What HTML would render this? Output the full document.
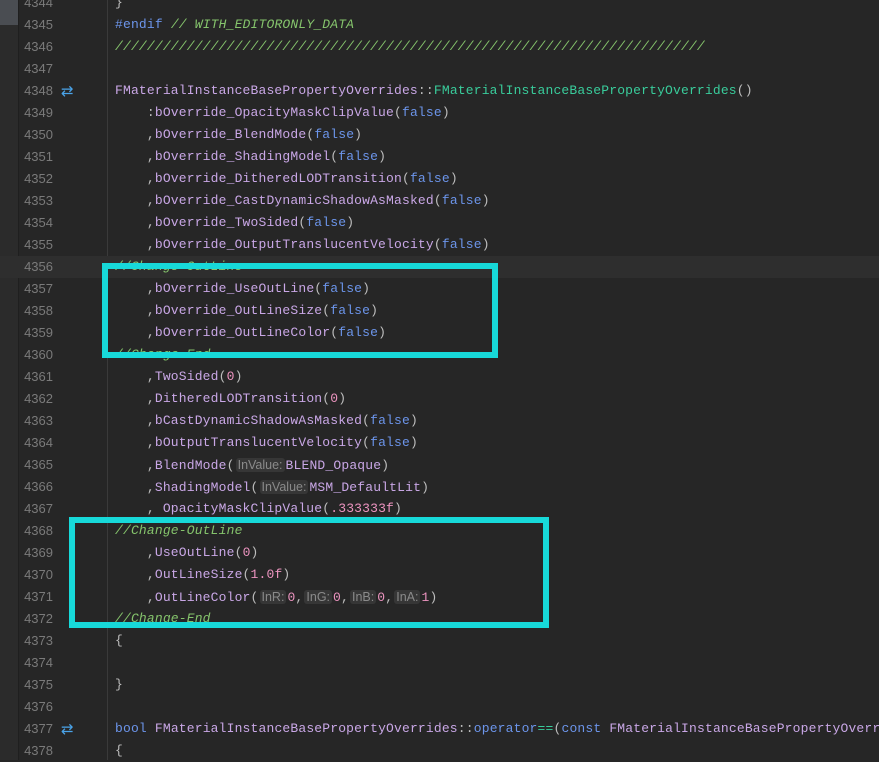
<!DOCTYPE html>
<html><head><meta charset="utf-8"><style>
body{margin:0;width:879px;height:760px;background:#262626;overflow:hidden;position:relative;font-family:"Liberation Mono",monospace;font-size:13px}
.strip{position:absolute;left:0;top:0;width:18px;height:760px;background:#2b2b2b;border-right:1px solid #1f1f1f}
.strip div{position:absolute;left:0;top:0;width:18px;height:25px;background:#4a4d52}
.fold{position:absolute;left:107px;top:0;width:1px;height:760px;background:#3a3a3a}
.r{position:absolute;left:0;height:22px;line-height:22px;width:879px;white-space:pre}
.hl{background:#2e2e2e}
.n{position:absolute;left:18px;width:35px;text-align:right;color:#7a7a7a;font-family:"Liberation Sans",sans-serif;font-size:13px}
.c{position:absolute;left:115px;color:#bdbdbd;letter-spacing:0.17px}
.i{color:#c9a7e6}.g{color:#39cc9b}.b{color:#6c95eb}.m{color:#ed94c0}
.cm{color:#85c46c;font-style:italic}
.h{background:#363636;color:#8a8a8a;font-family:"Liberation Sans",sans-serif;font-size:12.5px;border-radius:3px;padding:0 2px;margin:0 1px;letter-spacing:0}
.ic{position:absolute;left:61px;color:#4aa3e8;font-size:15px;font-family:"DejaVu Sans",sans-serif}
.box{position:absolute;border:6px solid #17d9d9;box-sizing:border-box}
</style></head><body>
<div class="strip"><div></div></div>
<div class="fold"></div>
<div class="r" style="top:-8px"><span class="n">4344</span><span class="c">}</span></div>
<div class="r" style="top:14px"><span class="n">4345</span><span class="c"><span class="b">#endif</span> <span class="cm">// WITH_EDITORONLY_DATA</span></span></div>
<div class="r" style="top:36px"><span class="n">4346</span><span class="c"><span class="cm">//////////////////////////////////////////////////////////////////////////</span></span></div>
<div class="r" style="top:58px"><span class="n">4347</span></div>
<div class="r" style="top:80px"><span class="n">4348</span><span class="ic">⇄</span><span class="c"><span class="i">FMaterialInstanceBasePropertyOverrides</span>::<span class="g">FMaterialInstanceBasePropertyOverrides</span>()</span></div>
<div class="r" style="top:102px"><span class="n">4349</span><span class="c">    :<span class="i">bOverride_OpacityMaskClipValue</span>(<span class="b">false</span>)</span></div>
<div class="r" style="top:124px"><span class="n">4350</span><span class="c">    ,<span class="i">bOverride_BlendMode</span>(<span class="b">false</span>)</span></div>
<div class="r" style="top:146px"><span class="n">4351</span><span class="c">    ,<span class="i">bOverride_ShadingModel</span>(<span class="b">false</span>)</span></div>
<div class="r" style="top:168px"><span class="n">4352</span><span class="c">    ,<span class="i">bOverride_DitheredLODTransition</span>(<span class="b">false</span>)</span></div>
<div class="r" style="top:190px"><span class="n">4353</span><span class="c">    ,<span class="i">bOverride_CastDynamicShadowAsMasked</span>(<span class="b">false</span>)</span></div>
<div class="r" style="top:212px"><span class="n">4354</span><span class="c">    ,<span class="i">bOverride_TwoSided</span>(<span class="b">false</span>)</span></div>
<div class="r" style="top:234px"><span class="n">4355</span><span class="c">    ,<span class="i">bOverride_OutputTranslucentVelocity</span>(<span class="b">false</span>)</span></div>
<div class="r hl" style="top:256px"><span class="n">4356</span><span class="c"><span class="cm">//Change-OutLine</span></span></div>
<div class="r" style="top:278px"><span class="n">4357</span><span class="c">    ,<span class="i">bOverride_UseOutLine</span>(<span class="b">false</span>)</span></div>
<div class="r" style="top:300px"><span class="n">4358</span><span class="c">    ,<span class="i">bOverride_OutLineSize</span>(<span class="b">false</span>)</span></div>
<div class="r" style="top:322px"><span class="n">4359</span><span class="c">    ,<span class="i">bOverride_OutLineColor</span>(<span class="b">false</span>)</span></div>
<div class="r" style="top:344px"><span class="n">4360</span><span class="c"><span class="cm">//Change-End</span></span></div>
<div class="r" style="top:366px"><span class="n">4361</span><span class="c">    ,<span class="i">TwoSided</span>(<span class="m">0</span>)</span></div>
<div class="r" style="top:388px"><span class="n">4362</span><span class="c">    ,<span class="i">DitheredLODTransition</span>(<span class="m">0</span>)</span></div>
<div class="r" style="top:410px"><span class="n">4363</span><span class="c">    ,<span class="i">bCastDynamicShadowAsMasked</span>(<span class="b">false</span>)</span></div>
<div class="r" style="top:432px"><span class="n">4364</span><span class="c">    ,<span class="i">bOutputTranslucentVelocity</span>(<span class="b">false</span>)</span></div>
<div class="r" style="top:454px"><span class="n">4365</span><span class="c">    ,<span class="i">BlendMode</span>(<span class="h">InValue:</span><span class="i">BLEND_Opaque</span>)</span></div>
<div class="r" style="top:476px"><span class="n">4366</span><span class="c">    ,<span class="i">ShadingModel</span>(<span class="h">InValue:</span><span class="i">MSM_DefaultLit</span>)</span></div>
<div class="r" style="top:498px"><span class="n">4367</span><span class="c">    , <span class="i">OpacityMaskClipValue</span>(<span class="m">.333333f</span>)</span></div>
<div class="r" style="top:520px"><span class="n">4368</span><span class="c"><span class="cm">//Change-OutLine</span></span></div>
<div class="r" style="top:542px"><span class="n">4369</span><span class="c">    ,<span class="i">UseOutLine</span>(<span class="m">0</span>)</span></div>
<div class="r" style="top:564px"><span class="n">4370</span><span class="c">    ,<span class="i">OutLineSize</span>(<span class="m">1.0f</span>)</span></div>
<div class="r" style="top:586px"><span class="n">4371</span><span class="c">    ,<span class="i">OutLineColor</span>(<span class="h">InR:</span><span class="m">0</span>,<span class="h">InG:</span><span class="m">0</span>,<span class="h">InB:</span><span class="m">0</span>,<span class="h">InA:</span><span class="m">1</span>)</span></div>
<div class="r" style="top:608px"><span class="n">4372</span><span class="c"><span class="cm">//Change-End</span></span></div>
<div class="r" style="top:630px"><span class="n">4373</span><span class="c">{</span></div>
<div class="r" style="top:652px"><span class="n">4374</span></div>
<div class="r" style="top:674px"><span class="n">4375</span><span class="c">}</span></div>
<div class="r" style="top:696px"><span class="n">4376</span></div>
<div class="r" style="top:718px"><span class="n">4377</span><span class="ic">⇄</span><span class="c"><span class="b">bool</span> <span class="i">FMaterialInstanceBasePropertyOverrides</span>::<span class="b">operator</span><span class="g">==</span>(<span class="b">const</span> <span class="i">FMaterialInstanceBasePropertyOverrides</span></span></div>
<div class="r" style="top:740px"><span class="n">4378</span><span class="c">{</span></div>
<div class="box" style="left:102px;top:263px;width:396px;height:95px"></div>
<div class="box" style="left:69px;top:517px;width:480px;height:111px"></div>
</body></html>
